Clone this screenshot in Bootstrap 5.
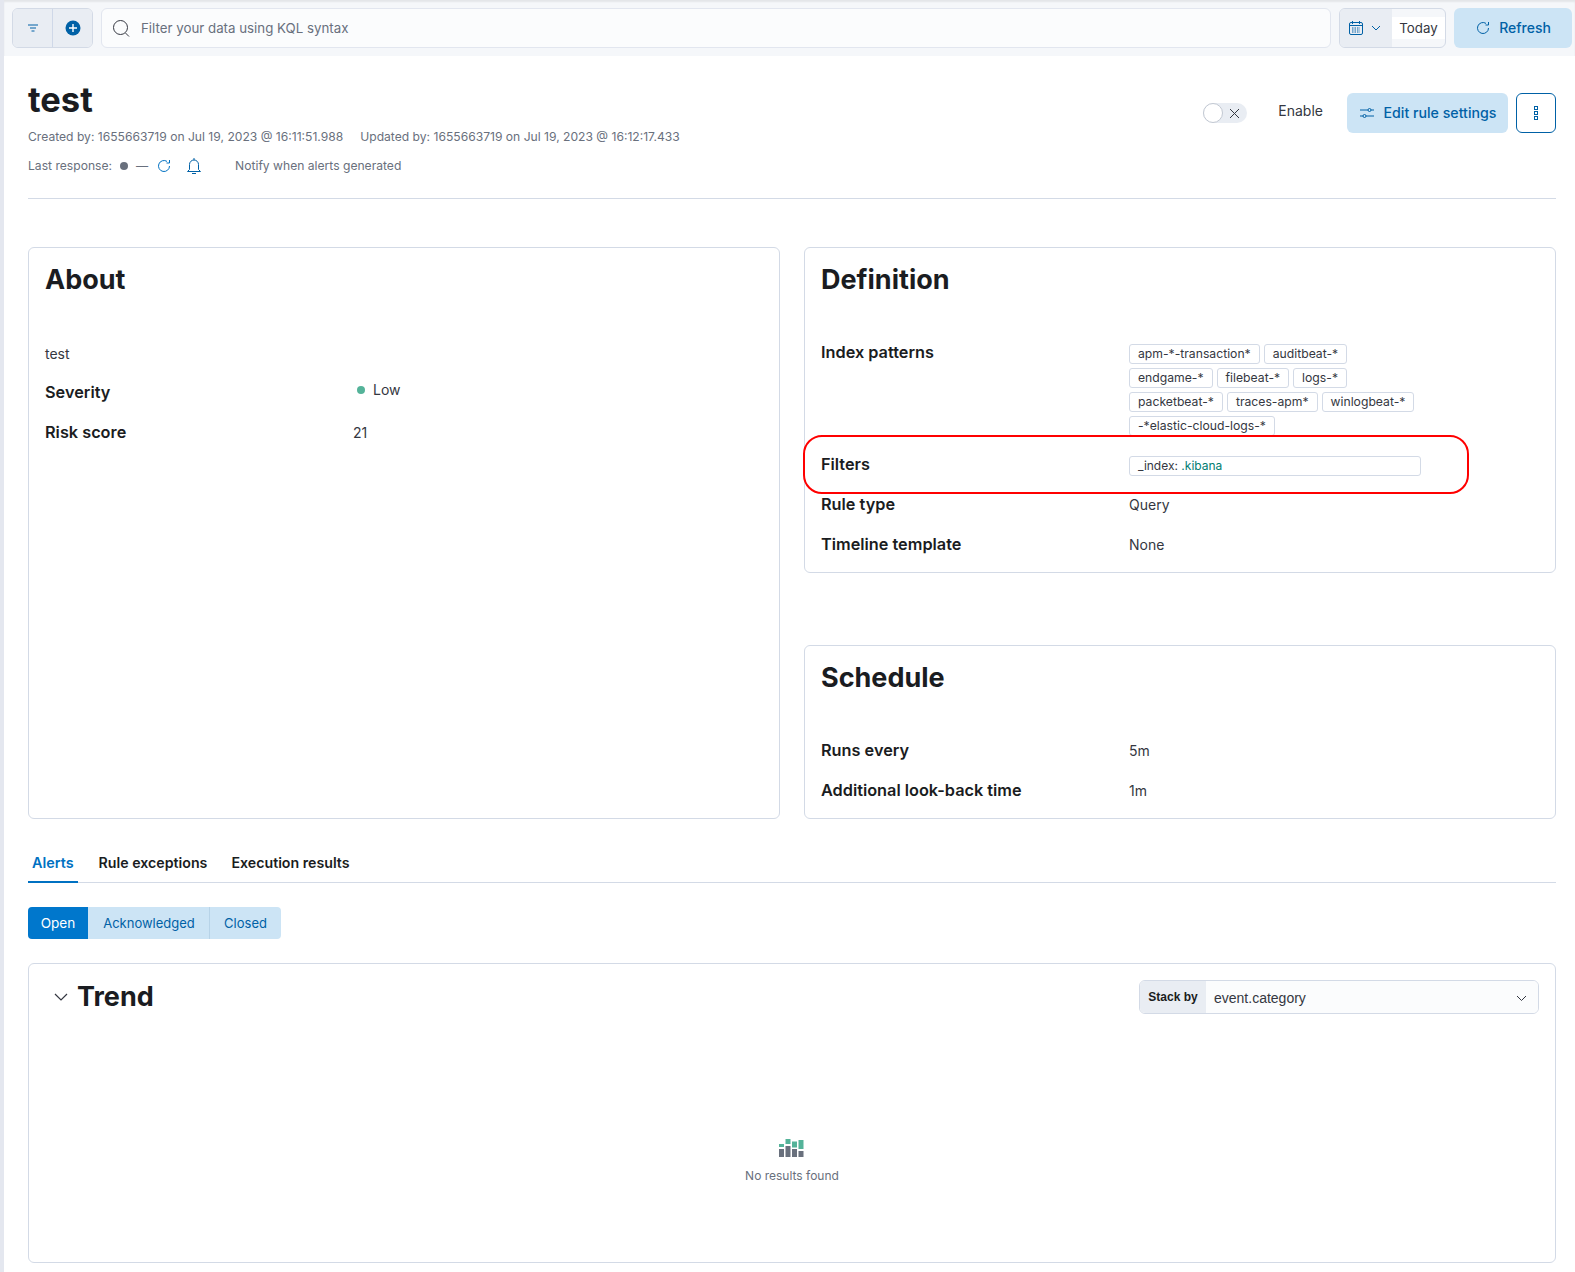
<!DOCTYPE html>
<html lang="en">
<head>
<meta charset="UTF-8" />
<meta name="viewport" content="width=device-width, initial-scale=1.0" />
<title>test - Rule details</title>
<link rel="stylesheet" href="https://cdn.jsdelivr.net/npm/bootstrap@5.3.0/dist/css/bootstrap.min.css" />
<style>
body { font-family: Inter, "Liberation Sans", sans-serif; color: #343741; background: #fff; font-size: 14px; height: 1272px; overflow: hidden; }
.app-shell { border-left: 4px solid #e4e7ef; min-height: 1272px; }
.query-bar { height: 56px; background: #f5f7fa; padding: 8px 3px 8px 8px; box-shadow: inset 0 2px 2px rgba(0,0,0,.07); gap: 8px; }
.bar-group { height: 40px; border: 1px solid #d3dae6; border-radius: 6px; overflow: hidden; }
.bar-cell { background: #e9edf3; display: flex; align-items: center; justify-content: center; height: 100%; }
.filter-cell { width: 40px; border-right: 1px solid #cfd8e8; }
.add-cell { width: 39px; }
.kql-input { height: 40px; flex: 1 1 auto; background: #fbfcfd; border: 1px solid #e2e6ef; border-radius: 6px; padding-left: 11px; gap: 11px; color: #69707d; font-size: 13.3px; }
.kql-text { padding-top: 2px; }
.date-group { width: 107px; }
.date-icon { width: 52px; gap: 7px; padding-right: 3px; }
.date-label { flex: 1; text-align: center; color: #343741; background: #fff; font-size: 13.3px; padding-top: 2px; }
.refresh-btn { width: 118px; height: 40px; background: #cce4f5; color: #0061a6; border: 0; border-radius: 6px; font-weight: 500; gap: 9px; font-size: 14px; padding-left: 7px; }
.refresh-text { margin-bottom: 2px; }
.page-body { padding: 0 19px 0 24px; }
.rule-head { padding-top: 24px; height: 143px; border-bottom: 1px solid #d3dae6; }
.rule-title { font-size: 34.5px; font-weight: 700; line-height: 40px; color: #1a1c21; margin: 0 0 7px; }
.meta-line { font-size: 12.12px; line-height: 20px; color: #69707d; }
.meta-line + .meta-line { margin-top: 9px; }
.meta-gap { margin-left: 17px; }
.status-dot { width: 8px; height: 8px; border-radius: 50%; background: #69707d; display: inline-block; }
.refresh-mini { margin-left: 9px; }
.bell-mini { margin-left: 14px; }
.notify-text { margin-left: 32px; }
.head-actions { gap: 0; margin-top: 13px; }
.rule-switch { width: 44px; height: 20px; background: #e9edf3; border-radius: 10px; position: relative; margin-top: 10px; margin-left: 1px; display: flex; align-items: center; justify-content: flex-end; padding-right: 7px; }
.rule-switch::before { content: ""; position: absolute; left: 0; top: 0; width: 20px; height: 20px; border-radius: 50%; background: #fff; border: 1px solid #c2c8d2; }
.enable-label { margin-left: 31px; margin-right: 24px; color: #343741; line-height: 40px; margin-top: -2px; }
.edit-btn { width: 161px; height: 40px; background: #cce4f5; color: #0061a6; border: 0; border-radius: 6px; font-weight: 500; gap: 9px; font-size: 14.2px; padding-left: 8px; }
.more-btn { width: 40px; height: 40px; border: 1px solid #0061a6; background: #fff; border-radius: 6px; margin-left: 8px; }
.cards-row { display: grid; grid-template-columns: 752px 752px; column-gap: 24px; margin-top: 48px; height: 572px; }
.panel-box { border: 1px solid #d3dae6; border-radius: 6px; padding: 16px; background: #fff; }
.panel-title { font-size: 27px; font-weight: 700; line-height: 32px; color: #1a1c21; margin: 0 0 46px; }
.def-column { display: flex; flex-direction: column; justify-content: space-between; }
.def-panel { height: 326px; position: relative; }
.sched-panel { height: 174px; }
.term-row { display: flex; margin-bottom: 20px; }
.term-name { font-weight: 600; font-size: 16.3px; line-height: 20px; color: #1a1c21; width: 308px; flex: none; }
.term-value { font-size: 14px; line-height: 20px; color: #343741; margin-top: 1px; margin-bottom: -1px; }
.about-text { margin-bottom: 16px; line-height: 24px; }
.about-name { width: 308px; }
.low-value { margin-top: -2px; margin-bottom: 0; height: 20px; }
.sev-dot { width: 8px; height: 8px; border-radius: 50%; background: #54b399; display: inline-block; margin: 0 8px 0 4px; }
.pattern-row { margin-bottom: 18px; }
.pattern-list { display: flex; flex-wrap: wrap; gap: 4px; width: 300px; margin-top: 2px; }
.pattern-tag { height: 20px; border: 1px solid #d3dae6; border-radius: 3px; padding: 0 8px; font-size: 12.2px; line-height: 18px; color: #343741; white-space: nowrap; }
.filter-row { margin-bottom: 19px; }
.filter-pill { width: 292px; height: 20px; margin-top: 2px; margin-bottom: -1px; border: 1px solid #d3dae6; border-radius: 3px; padding: 0 8px; font-size: 12px; line-height: 18px; }
.filter-val { color: #017d73; }
.red-callout { position: absolute; left: -2px; top: 187px; width: 666px; height: 59px; border: 2px solid #ff0000; border-radius: 19px; pointer-events: none; }
.tab-strip { margin-top: 24px; height: 40px; border-bottom: 1px solid #d3dae6; gap: 16px; }
.tab-item { font-weight: 600; font-size: 14.2px; line-height: 40px; height: 40px; color: #1a1c21; padding: 0 4px; }
.tab-item.is-on { color: #0071c2; border-bottom: 2px solid #0071c2; height: 40px; font-size: 14.4px; margin-right: 1px; }
.status-group { margin-top: 24px; height: 32px; width: fit-content; border-radius: 4px; overflow: hidden; }
.status-seg { height: 32px; line-height: 32px; background: #cce4f5; color: #0061a6; text-align: center; font-size: 13px; }
.status-seg.is-on { background: #0077cc; color: #fff; width: 60px; font-size: 13.6px; }
.seg-ack { width: 122px; border-right: 1px solid #b7d3e8; padding-left: 1px; }
.seg-closed { width: 71px; }
.trend-panel { margin-top: 24px; height: 300px; position: relative; padding: 16px; }
.trend-title { font-size: 27px; font-weight: 700; line-height: 34px; color: #1a1c21; gap: 8px; margin: 0; padding-left: 8px; }
.stack-group { width: 400px; height: 34px; border: 1px solid #d3dae6; border-radius: 6px; overflow: hidden; }
.stack-label { background: #e9edf3; width: 66px; font-size: 12px; font-weight: 600; color: #1a1c21; text-align: center; line-height: 32px; font-family: "Liberation Sans", sans-serif; }
.stack-value { flex: 1; background: #fbfcfd; padding: 2px 11px 0 8px; font-family: "Liberation Sans", sans-serif; font-size: 14px; color: #343741; }
.empty-chart { margin-top: 125px; color: #69707d; font-size: 12px; gap: 10px; }
</style>
</head>
<body>
<div class="app-shell">
   <div class="query-bar d-flex">
      <div class="bar-group d-flex">
         <div class="bar-cell filter-cell">
            <svg width="12" height="12" viewBox="0 0 12 12" fill="none" stroke="#0061a6"><path d="M1 3h10M3 6h6M4.5 9h3"/></svg>
         </div>
         <div class="bar-cell add-cell">
            <svg width="16" height="16" viewBox="0 0 16 16"><circle cx="8" cy="8" r="7.5" fill="#0061a6"/><path d="M8 4v8M4 8h8" stroke="#fff" stroke-width="1.4"/></svg>
         </div>
      </div>
      <div class="kql-input d-flex align-items-center">
         <svg width="17" height="17" viewBox="0 0 17 17" fill="none" stroke="#343741"><circle cx="7.5" cy="7.5" r="7"/><path d="M12.5 13l3.5 3.5"/></svg>
         <span class="kql-text">Filter your data using KQL syntax</span>
      </div>
      <div class="bar-group date-group d-flex">
         <div class="bar-cell date-icon">
            <svg width="16" height="16" viewBox="0 0 16 16" fill="none" stroke="#0061a6"><rect x="1.5" y="2.5" width="13" height="12" rx="1.5"/><path d="M1.5 5.5h13M4.5 1v3M11.5 1v3"/><path d="M4 8h8M4 10h8M4 12h8" stroke-dasharray="1.5 1"/></svg>
            <svg width="10" height="6" viewBox="0 0 10 6" fill="none" stroke="#0061a6"><path d="M1 1l4 4 4-4"/></svg>
         </div>
         <div class="date-label align-self-center">Today</div>
      </div>
      <button type="button" class="refresh-btn d-flex align-items-center justify-content-center">
         <svg width="14" height="14" viewBox="0 0 14 14" fill="none" stroke="#0061a6"><path d="M12.5 7A5.5 5.5 0 1 1 10 2.4"/><path d="M12.5 1v3h-3"/></svg>
         <span class="refresh-text">Refresh</span>
      </button>
   </div>

   <div class="page-body">
      <div class="rule-head d-flex justify-content-between">
         <div>
            <h1 class="rule-title">test</h1>
            <div class="meta-line">Created by: 1655663719 on Jul 19, 2023 @ 16:11:51.988<span class="meta-gap">Updated by: 1655663719 on Jul 19, 2023 @ 16:12:17.433</span></div>
            <div class="meta-line d-flex align-items-center">
               <span>Last response:</span>
               <span class="status-dot ms-2"></span>
               <span class="ms-2">—</span>
               <svg class="refresh-mini" width="14" height="14" viewBox="0 0 14 14" fill="none" stroke="#0071c2"><path d="M12.5 7A5.5 5.5 0 1 1 10 2.4"/><path d="M12.5 1v3h-3"/></svg>
               <svg class="bell-mini" width="18" height="18" viewBox="0 0 18 18" fill="none" stroke="#0061a6"><path d="M4.5 12.5V7.5a4.5 4.5 0 0 1 9 0v5l2 2h-13z"/><path d="M9 1v2M7 16.5h4"/></svg>
               <span class="notify-text">Notify when alerts generated</span>
            </div>
         </div>
         <div class="head-actions d-flex align-items-start">
            <div class="rule-switch">
               <svg width="11" height="11" viewBox="0 0 11 11" fill="none" stroke="#343741"><path d="M1 1l9 9M10 1l-9 9"/></svg>
            </div>
            <span class="enable-label">Enable</span>
            <button type="button" class="edit-btn d-flex align-items-center justify-content-center">
               <svg width="14" height="12" viewBox="0 0 14 12" fill="none" stroke="#0061a6"><path d="M0 3h8M11 3h3M0 9h3M6 9h8"/><circle cx="9.5" cy="3" r="1.5"/><circle cx="4.5" cy="9" r="1.5"/></svg>
               <span>Edit rule settings</span>
            </button>
            <button type="button" class="more-btn d-flex align-items-center justify-content-center p-0">
               <svg width="4" height="16" viewBox="0 0 4 16" fill="none" stroke="#0061a6"><rect x=".5" y="1.5" width="3" height="3"/><rect x=".5" y="6.5" width="3" height="3"/><rect x=".5" y="11.5" width="3" height="3"/></svg>
            </button>
         </div>
      </div>

      <div class="cards-row">
         <div class="panel-box">
            <h2 class="panel-title">About</h2>
            <div class="about-text">test</div>
            <div class="term-row">
               <div class="term-name about-name">Severity</div>
               <div class="term-value low-value d-flex align-items-center"><span class="sev-dot"></span>Low</div>
            </div>
            <div class="term-row">
               <div class="term-name about-name">Risk score</div>
               <div class="term-value">21</div>
            </div>
         </div>
         <div class="def-column">
            <div class="panel-box def-panel">
               <h2 class="panel-title">Definition</h2>
               <div class="term-row pattern-row">
                  <div class="term-name">Index patterns</div>
                  <div class="pattern-list">
                     <span class="pattern-tag">apm-*-transaction*</span>
                     <span class="pattern-tag">auditbeat-*</span>
                     <span class="pattern-tag">endgame-*</span>
                     <span class="pattern-tag">filebeat-*</span>
                     <span class="pattern-tag">logs-*</span>
                     <span class="pattern-tag">packetbeat-*</span>
                     <span class="pattern-tag">traces-apm*</span>
                     <span class="pattern-tag">winlogbeat-*</span>
                     <span class="pattern-tag">-*elastic-cloud-logs-*</span>
                  </div>
               </div>
               <div class="term-row filter-row">
                  <div class="term-name">Filters</div>
                  <div class="filter-pill">_index: <span class="filter-val">.kibana</span></div>
               </div>
               <div class="term-row">
                  <div class="term-name">Rule type</div>
                  <div class="term-value">Query</div>
               </div>
               <div class="term-row">
                  <div class="term-name">Timeline template</div>
                  <div class="term-value">None</div>
               </div>
               <div class="red-callout"></div>
            </div>
            <div class="panel-box sched-panel">
               <h2 class="panel-title">Schedule</h2>
               <div class="term-row">
                  <div class="term-name">Runs every</div>
                  <div class="term-value">5m</div>
               </div>
               <div class="term-row">
                  <div class="term-name">Additional look-back time</div>
                  <div class="term-value">1m</div>
               </div>
            </div>
         </div>
      </div>

      <div class="tab-strip d-flex">
         <div class="tab-item is-on">Alerts</div>
         <div class="tab-item">Rule exceptions</div>
         <div class="tab-item">Execution results</div>
      </div>

      <div class="status-group d-flex">
         <div class="status-seg is-on">Open</div>
         <div class="status-seg seg-ack">Acknowledged</div>
         <div class="status-seg seg-closed">Closed</div>
      </div>

      <div class="panel-box trend-panel">
         <div class="d-flex justify-content-between">
            <h2 class="trend-title d-flex align-items-center">
               <svg width="16" height="10" viewBox="0 0 16 10" fill="none" stroke="#343741" stroke-width="1.2"><path d="M2 2l6 6 6-6"/></svg>
               <span>Trend</span>
            </h2>
            <div class="stack-group d-flex">
               <div class="stack-label">Stack by</div>
               <div class="stack-value d-flex align-items-center justify-content-between">
                  <span>event.category</span>
                  <svg width="11" height="7" viewBox="0 0 11 7" fill="none" stroke="#343741"><path d="M1 1l4.5 4.5L10 1"/></svg>
               </div>
            </div>
         </div>
         <div class="empty-chart d-flex flex-column align-items-center">
            <svg width="26" height="18" viewBox="0 0 26 18">
               <g fill="#54b399"><rect x="0" y="5" width="5" height="3"/><rect x="6.5" y="0" width="5" height="5"/><rect x="13" y="2.5" width="5" height="6"/><rect x="19.5" y="1" width="5" height="9"/></g>
               <g fill="#69707d"><rect x="0" y="10" width="5" height="8"/><rect x="6.5" y="7" width="5" height="11"/><rect x="13" y="10" width="5" height="8"/><rect x="19.5" y="12" width="5" height="6"/></g>
            </svg>
            <span>No results found</span>
         </div>
      </div>
   </div>
</div>
<script src="https://cdn.jsdelivr.net/npm/bootstrap@5.3.0/dist/js/bootstrap.bundle.min.js"></script>
</body>
</html>
